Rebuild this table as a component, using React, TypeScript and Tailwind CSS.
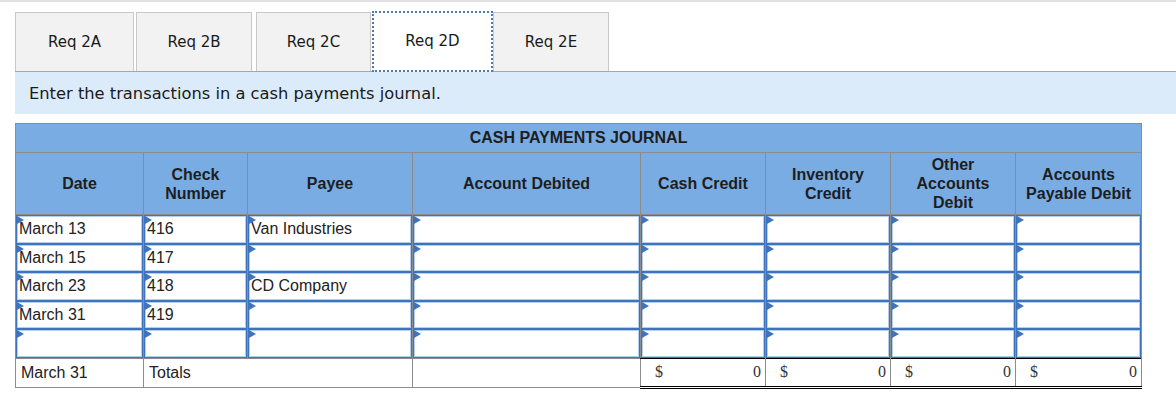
import React from 'react';

const tabs = [
  { label: 'Req 2A', cls: 'w-[119px]', active: false },
  { label: 'Req 2B', cls: 'w-[116px] ml-[2px]', active: false },
  { label: 'Req 2C', cls: 'w-[115px] ml-[4px]', active: false },
  { label: 'Req 2D', cls: 'w-[121px] ml-[1px]', active: true },
  { label: 'Req 2E', cls: 'w-[116px]', active: false },
];

const rows = [
  { date: 'March 13', check: '416', payee: 'Van Industries' },
  { date: 'March 15', check: '417', payee: '' },
  { date: 'March 23', check: '418', payee: 'CD Company' },
  { date: 'March 31', check: '419', payee: '' },
  { date: '', check: '', payee: '' },
];

const Flag = () => (
  <svg width="8" height="8" viewBox="0 0 8 8" className="absolute left-0 top-0">
    <polygon points="0,0 7,4 0,8" fill="#3f74bd" />
  </svg>
);

const InputCell = ({ value = '' }: { value?: string }) => (
  <td className="p-0 border-x border-[#8c8c8c] h-[28.5px]">
    <div className="relative h-[28.5px] border border-[#3f74bd] shadow-[inset_0_0_0_1px_#b3cff0] bg-white pl-[2px] leading-[26px] text-[16px] text-[#222]">
      <Flag />
      {value}
    </div>
  </td>
);

const MoneyTotal = () => (
  <td className="border-t border-t-black border-b-[3px] border-b-black border-double border-x border-x-[#8c8c8c] h-[29px] px-0">
    <div className="flex justify-between pl-[14px] pr-[4px] text-[16px] text-[#333] font-['Liberation_Serif',serif]">
      <span>$</span>
      <span>0</span>
    </div>
  </td>
);

export default function App() {
  return (
    <div className="w-[1176px] h-[398px] bg-white overflow-hidden font-['Liberation_Sans',Arial,sans-serif]">
      <div className="h-[2px] bg-[#e0e0e0]" />
      <div className="pl-[15px] pt-[9px]">
        <div className="flex items-end border-b border-[#a6a6a6] font-['DejaVu_Sans',sans-serif] text-[15px] text-[#1a1a1a]">
          {tabs.map((t) =>
            t.active ? (
              <div
                key={t.label}
                className={`${t.cls} h-[61px] -mb-px flex items-center justify-center bg-white border-2 border-dotted border-[#4a7ab8]`}
              >
                {t.label}
              </div>
            ) : (
              <div
                key={t.label}
                className={`${t.cls} h-[59px] flex items-center justify-center bg-[#f2f2f2] border border-b-0 border-[#c8c8c8]`}
              >
                {t.label}
              </div>
            )
          )}
        </div>
        <div className="h-[42px] bg-[#dcebf9] flex items-center pl-[14px] pt-[2px] font-['DejaVu_Sans',sans-serif] text-[16.3px] text-[#1a1a1a]">
          Enter the transactions in a cash payments journal.
        </div>

        <table className="mt-[9px] w-[1126px] table-fixed border-collapse border border-[#8c8c8c] text-[16px] text-[#222]">
          <colgroup>
            <col className="w-[128px]" />
            <col className="w-[104px]" />
            <col className="w-[165px]" />
            <col className="w-[228px]" />
            <col className="w-[125px]" />
            <col className="w-[125px]" />
            <col className="w-[125px]" />
            <col className="w-[126px]" />
          </colgroup>
          <thead>
            <tr>
              <th colSpan={8} className="h-[29px] bg-[#78ace3] border border-[#8c8c8c] font-bold text-center text-[#1e1e1e]">
                CASH PAYMENTS JOURNAL
              </th>
            </tr>
            <tr className="bg-[#78ace3] font-bold text-[#1e1e1e] leading-[19px]">
              <th className="h-[62px] border border-[#8c8c8c] font-bold">Date</th>
              <th className="border border-[#8c8c8c] font-bold">Check<br />Number</th>
              <th className="border border-[#8c8c8c] font-bold">Payee</th>
              <th className="border border-[#8c8c8c] font-bold">Account Debited</th>
              <th className="border border-[#8c8c8c] font-bold">Cash Credit</th>
              <th className="border border-[#8c8c8c] font-bold">Inventory<br />Credit</th>
              <th className="border border-[#8c8c8c] font-bold">Other<br />Accounts<br />Debit</th>
              <th className="border border-[#8c8c8c] font-bold">Accounts<br />Payable Debit</th>
            </tr>
          </thead>
          <tbody>
            {rows.map((r, i) => (
              <tr key={i}>
                <InputCell value={r.date} />
                <InputCell value={r.check} />
                <InputCell value={r.payee} />
                <InputCell />
                <InputCell />
                <InputCell />
                <InputCell />
                <InputCell />
              </tr>
            ))}
            <tr>
              <td className="h-[29px] border border-[#8c8c8c] px-[5px]">March 31</td>
              <td colSpan={2} className="border border-[#8c8c8c] px-[5px]">Totals</td>
              <td className="border border-[#8c8c8c]" />
              <MoneyTotal />
              <MoneyTotal />
              <MoneyTotal />
              <MoneyTotal />
            </tr>
          </tbody>
        </table>
      </div>
    </div>
  );
}
